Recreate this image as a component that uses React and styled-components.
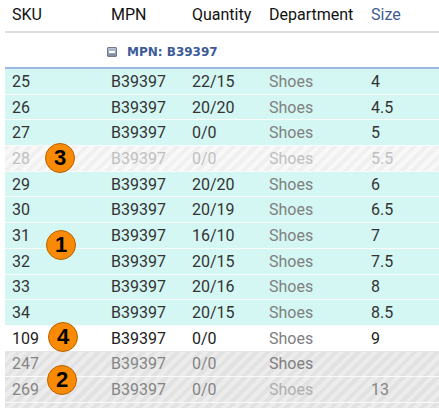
import styled, { createGlobalStyle, css } from 'styled-components';

const GlobalStyle = createGlobalStyle`
  body {
    margin: 0;
    background: #fff;
    font-family: Roboto, "Liberation Sans", sans-serif;
  }
`;

const COLS = '99px 81px 77px 102px 1fr';

const rows = [
  { sku: '25', mpn: 'B39397', qty: '22/15', dept: 'Shoes', size: '4', kind: 'active' },
  { sku: '26', mpn: 'B39397', qty: '20/20', dept: 'Shoes', size: '4.5', kind: 'active' },
  { sku: '27', mpn: 'B39397', qty: '0/0', dept: 'Shoes', size: '5', kind: 'active' },
  { sku: '28', mpn: 'B39397', qty: '0/0', dept: 'Shoes', size: '5.5', kind: 'disabled' },
  { sku: '29', mpn: 'B39397', qty: '20/20', dept: 'Shoes', size: '6', kind: 'active' },
  { sku: '30', mpn: 'B39397', qty: '20/19', dept: 'Shoes', size: '6.5', kind: 'active' },
  { sku: '31', mpn: 'B39397', qty: '16/10', dept: 'Shoes', size: '7', kind: 'active' },
  { sku: '32', mpn: 'B39397', qty: '20/15', dept: 'Shoes', size: '7.5', kind: 'active' },
  { sku: '33', mpn: 'B39397', qty: '20/16', dept: 'Shoes', size: '8', kind: 'active' },
  { sku: '34', mpn: 'B39397', qty: '20/15', dept: 'Shoes', size: '8.5', kind: 'active' },
  { sku: '109', mpn: 'B39397', qty: '0/0', dept: 'Shoes', size: '9', kind: 'plain' },
  { sku: '247', mpn: 'B39397', qty: '0/0', dept: 'Shoes', size: '', kind: 'locked' },
  { sku: '269', mpn: 'B39397', qty: '0/0', dept: 'Shoes', size: '13', kind: 'locked', faintDept: true },
  { sku: '', mpn: '', qty: '', dept: '', size: '', kind: 'locked' },
];

const badges = [
  { n: 3, x: 60, y: 158 },
  { n: 1, x: 61, y: 245 },
  { n: 4, x: 63, y: 337 },
  { n: 2, x: 62, y: 380 },
];

const deptTone = (r) => {
  if (r.kind === 'disabled') return 'inherit';
  if (r.faintDept) return '#b0b0b0';
  return '#808080';
};

export default function App() {
  return (
    <>
      <GlobalStyle />
      <Grid>
        <HeaderRow>
          <HeadCell>SKU</HeadCell>
          <HeadCell>MPN</HeadCell>
          <HeadCell>Quantity</HeadCell>
          <HeadCell>Department</HeadCell>
          <HeadCell $sorted>Size</HeadCell>
        </HeaderRow>

        <GroupRow>
          <GroupLabel>
            <CollapseBox />
            MPN: B39397
          </GroupLabel>
        </GroupRow>

        {rows.map((r, i) => (
          <Row key={i} $kind={r.kind}>
            <Cell>{r.sku}</Cell>
            <Cell>{r.mpn}</Cell>
            <Cell>{r.qty}</Cell>
            <Cell $tone={deptTone(r)}>{r.dept}</Cell>
            <Cell>{r.size}</Cell>
          </Row>
        ))}

        {badges.map((b) => (
          <Badge key={b.n} style={{ left: b.x - 15, top: b.y - 15 }}>
            {b.n}
          </Badge>
        ))}
      </Grid>
    </>
  );
}

const Grid = styled.div`
  position: relative;
  padding-left: 5px;
  height: 408px;
  overflow: hidden;
`;

const HeaderRow = styled.div`
  display: grid;
  grid-template-columns: ${COLS};
  height: 31px;
  align-items: center;
  border-bottom: 2px solid #dcdcdc;
`;

const HeadCell = styled.div`
  padding-left: 7px;
  font-size: 16px;
  color: ${(p) => (p.$sorted ? '#3f5d8e' : '#111')};
  padding-bottom: 2px;
`;

const GroupRow = styled.div`
  display: grid;
  grid-template-columns: ${COLS};
  height: 34px;
  align-items: center;
  border-bottom: 2px solid #9bb8e3;
`;

const GroupLabel = styled.div`
  grid-column: 2 / 6;
  display: flex;
  align-items: center;
  gap: 10px;
  padding-left: 3px;
  padding-top: 4px;
  font-family: "DejaVu Sans", Verdana, sans-serif;
  font-weight: bold;
  font-size: 12px;
  color: #3c5b98;
`;

const CollapseBox = styled.span`
  position: relative;
  width: 10px;
  height: 10px;
  box-sizing: border-box;
  border: 1px solid #6f7c90;
  border-radius: 1px;
  background: linear-gradient(#b9c3d2, #7d8aa0);

  &::after {
    content: '';
    position: absolute;
    left: 1px;
    right: 1px;
    top: 3px;
    height: 2px;
    background: #fff;
  }
`;

const rowBg = {
  active: css`
    background: #d4f7f3;
    color: #333;
  `,
  plain: css`
    background: #fff;
    color: #222;
    border-bottom-color: #e6e6e6;
  `,
  disabled: css`
    background: repeating-linear-gradient(135deg, #f0f0f0 0 4px, #f8f8f8 4px 8px);
    color: #c0c0c0;
  `,
  locked: css`
    background: repeating-linear-gradient(135deg, #e2e2e2 0 4px, #ececec 4px 8px);
    color: #858585;
  `,
};

const Row = styled.div`
  display: grid;
  grid-template-columns: ${COLS};
  height: 24.7px;
  align-items: center;
  border-bottom: 1px solid #fafafa;
  font-size: 16px;
  ${(p) => rowBg[p.$kind]}
`;

const Cell = styled.div`
  padding-left: 7px;
  color: ${(p) => p.$tone || 'inherit'};
`;

const Badge = styled.div`
  position: absolute;
  width: 30px;
  height: 30px;
  box-sizing: border-box;
  border-radius: 50%;
  background: #f88a06;
  border: 1px solid #b86200;
  display: flex;
  align-items: center;
  justify-content: center;
  font-family: "Liberation Sans", Arial, sans-serif;
  font-weight: bold;
  font-size: 22px;
  color: #000;
`;
